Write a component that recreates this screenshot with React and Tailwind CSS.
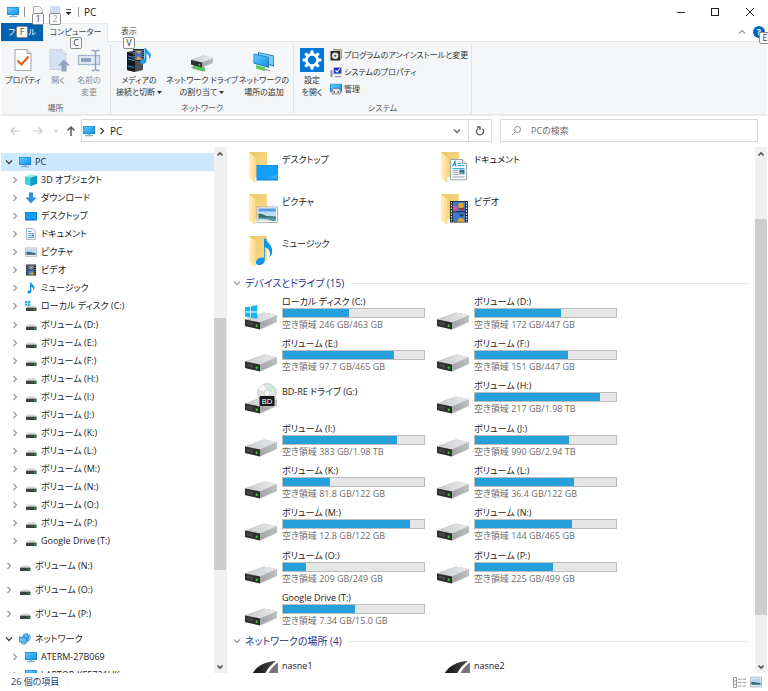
import React from 'react';

const drives = [
  { name: 'ローカル ディスク (C:)', free: '空き領域 246 GB/463 GB', used: 47, type: 'windows' },
  { name: 'ボリューム (D:)', free: '空き領域 172 GB/447 GB', used: 61 },
  { name: 'ボリューム (E:)', free: '空き領域 97.7 GB/465 GB', used: 79 },
  { name: 'ボリューム (F:)', free: '空き領域 151 GB/447 GB', used: 66 },
  { name: 'BD-RE ドライブ (G:)', type: 'bd' },
  { name: 'ボリューム (H:)', free: '空き領域 217 GB/1.98 TB', used: 89 },
  { name: 'ボリューム (I:)', free: '空き領域 383 GB/1.98 TB', used: 81 },
  { name: 'ボリューム (J:)', free: '空き領域 990 GB/2.94 TB', used: 67 },
  { name: 'ボリューム (K:)', free: '空き領域 81.8 GB/122 GB', used: 33 },
  { name: 'ボリューム (L:)', free: '空き領域 36.4 GB/122 GB', used: 70 },
  { name: 'ボリューム (M:)', free: '空き領域 12.8 GB/122 GB', used: 90 },
  { name: 'ボリューム (N:)', free: '空き領域 144 GB/465 GB', used: 69 },
  { name: 'ボリューム (O:)', free: '空き領域 209 GB/249 GB', used: 16 },
  { name: 'ボリューム (P:)', free: '空き領域 225 GB/499 GB', used: 55 },
  { name: 'Google Drive (T:)', free: '空き領域 7.34 GB/15.0 GB', used: 51 },
];

const folders = [
  { name: 'デスクトップ', type: 'desktop' },
  { name: 'ドキュメント', type: 'document' },
  { name: 'ピクチャ', type: 'picture' },
  { name: 'ビデオ', type: 'video' },
  { name: 'ミュージック', type: 'music' },
];

const treeFolders = [
  { name: '3D オブジェクト', type: 'cube' },
  { name: 'ダウンロード', type: 'download' },
  { name: 'デスクトップ', type: 'desktop' },
  { name: 'ドキュメント', type: 'document' },
  { name: 'ピクチャ', type: 'picture' },
  { name: 'ビデオ', type: 'video' },
  { name: 'ミュージック', type: 'music' },
  { name: 'ローカル ディスク (C:)', type: 'windows' },
];

const treeDrives = ['D', 'E', 'F', 'H', 'I', 'J', 'K', 'L', 'M', 'N', 'O', 'P'];

function Gradients() {
  return (
    <svg className="absolute h-0 w-0" aria-hidden="true">
      <defs>
        <linearGradient id="screen" x1="0" y1="0" x2="1" y2="1">
          <stop offset="0" stopColor="#69c8fb" />
          <stop offset="0.5" stopColor="#38aef5" />
          <stop offset="1" stopColor="#1a8fe3" />
        </linearGradient>
        <linearGradient id="folderFront" x1="0" y1="0" x2="1" y2="0">
          <stop offset="0" stopColor="#fff0bd" />
          <stop offset="1" stopColor="#fbdc86" />
        </linearGradient>
        <linearGradient id="folderBack" x1="0" y1="0" x2="1" y2="1">
          <stop offset="0" stopColor="#eec867" />
          <stop offset="1" stopColor="#f8dd8d" />
        </linearGradient>
        <linearGradient id="driveTop" x1="0" y1="0" x2="1" y2="0">
          <stop offset="0" stopColor="#c9cacc" />
          <stop offset="1" stopColor="#e9eaec" />
        </linearGradient>
        <linearGradient id="driveSide" x1="0" y1="0" x2="1" y2="0">
          <stop offset="0" stopColor="#8a8b8d" />
          <stop offset="1" stopColor="#bfc0c2" />
        </linearGradient>
        <linearGradient id="nas" x1="0" y1="0" x2="1" y2="0">
          <stop offset="0" stopColor="#0b0b0c" />
          <stop offset="1" stopColor="#4b494d" />
        </linearGradient>
      </defs>
    </svg>
  );
}

function Chevron({ open, dark }) {
  return (
    <svg className="h-2 w-2 shrink-0" viewBox="0 0 8 8" fill="none" stroke={dark ? '#404040' : '#9c9c9c'} strokeWidth="1.3">
      {open ? <path d="M1 2.5 4 5.5 7 2.5" /> : <path d="M2.5 1 5.5 4 2.5 7" />}
    </svg>
  );
}

function DriveShape() {
  return (
    <g>
      <path d="M0 22.5 19 15.500 32 18v7L15 32.500 0 29z" fill="url(#driveSide)" />
      <path d="M0 22.5 19 15.500 32 18 15 25.500z" fill="url(#driveTop)" />
      <path d="M0 22.5 15 25.500v7L0 29z" fill="#2c2d2f" />
      <path d="M1.5 24.5 8 25.800v3.200L1.500 27.500z" fill="#454648" />
      <circle cx="11.700" cy="28.800" r="1.200" fill="#37c837" />
    </g>
  );
}

function DriveIcon({ type }) {
  return (
    <svg className="h-[34px] w-[34px] shrink-0" viewBox="0 0 34 34">
      <DriveShape />
      {type === 'windows' && (
        <path d="M0 10.2 5.2 9.4v5.2H0zM6 9.2 12.3 8v6.6H6zM0 15.4h5.2v5.2L0 19.8zM6 15.4h6.3v6.4L6 20.8z" fill="#16b7f1" />
      )}
      {type === 'bd' && (
        <g>
          <circle cx="22" cy="12" r="9.5" fill="#dfe3e4" stroke="#bcc0c1" strokeWidth="0.7" />
          <path d="M22 12 13.5 8a9.5 9.5 0 0 1 5-4.6z" fill="#f8f9f9" />
          <path d="M22 12 26 3.6a9.5 9.5 0 0 1 5 5.4z" fill="#c4ecd8" />
          <circle cx="22" cy="12" r="3" fill="#f8f8f8" stroke="#c4c6c6" strokeWidth="0.7" />
          <rect x="14.5" y="15" width="15" height="10" rx="1" fill="#1a1a1a" />
          <text x="22" y="22.8" textAnchor="middle" fontSize="7.5" fill="#fff" fontFamily="Liberation Sans, sans-serif">BD</text>
        </g>
      )}
    </svg>
  );
}

function Note() {
  return <path d="M19 4.5h2c.6 4.500 7.500 6.500 6 14.500-.5 2-1.600 3.500-2.700 4.500 1.700-5.500-.3-9-4.500-10.500V26c0 3.500-3.300 5.300-6.400 5-2.500-.3-3.300-2.500-2-4.500 1.500-2.400 5-3.500 7.600-2.600z" fill="#0e96ee" />;
}

function FolderIcon({ type }) {
  return (
    <svg className="h-[34px] w-[34px] shrink-0" viewBox="0 0 34 34">
      <path d="M4 2h18v25H8z" fill="url(#folderBack)" />
      <path d="M4 2 10.500 7.500v24c0 1-.8 1.200-1.500.7L4 27.500z" fill="url(#folderFront)" />
      {type === 'desktop' && (
        <g>
          <rect x="11.500" y="15" width="21.500" height="15.500" fill="#0e8de8" />
          <rect x="12.200" y="15.600" width="20" height="13" fill="#12a0fb" />
          <path d="M32.200 15.600v9L20.500 28.600h11.700z" fill="#31adfc" />
        </g>
      )}
      {type === 'document' && (
        <g>
          <path d="M13.500 9.500h12l4 4v16.300h-16z" fill="#fbfcfd" stroke="#8e979f" strokeWidth="0.9" />
          <path d="M25.500 9.500v4h4" fill="#dfe4e8" stroke="#8e979f" strokeWidth="0.8" />
          <path d="M15.500 16.500 18 11.500 19 16.500M16.500 14.800h2.300" stroke="#1793dd" fill="none" strokeWidth="1.100" />
          <path d="M20.500 13.500h4M20.500 15.500h7M15.500 18.500h12" stroke="#35a6e8" />
          <path d="M15.500 20.500h6M15.500 22.500h6M15.500 24.500h6M15.500 27h12" stroke="#98a3ab" />
          <rect x="22.500" y="19.700" width="5" height="4.500" fill="#2f6c9e" />
          <path d="M22.500 23.500 24.500 21.500 27.500 24.200h-5z" fill="#75b37e" />
        </g>
      )}
      {type === 'picture' && (
        <g>
          <rect x="12" y="15" width="20.500" height="15.500" fill="#fff" stroke="#9aa0a6" strokeWidth="0.8" />
          <rect x="13.500" y="16.500" width="17.500" height="12.500" fill="#b9dcf7" />
          <rect x="13.500" y="16.500" width="17.500" height="3" fill="#5c9de0" />
          <path d="M13.500 21.500c3 .3 5 1 8 2.500l9.500.5v1.500H13.500z" fill="#3c6b56" />
          <path d="M13.500 25.500H31V29H13.500z" fill="#4b98b8" />
          <path d="M13.500 27c5-.6 10 .2 14 2h-14z" fill="#d8dfcf" />
        </g>
      )}
      {type === 'video' && (
        <g>
          <rect x="13" y="9" width="18" height="21.500" fill="#262626" />
          <rect x="16" y="9.800" width="12" height="9.500" fill="#3a78d6" />
          <rect x="16" y="20.300" width="12" height="9.500" fill="#3a78d6" />
          <path d="M16 14c2-1 4 0 5 2l-1 3h-4z" fill="#c65a9e" />
          <circle cx="24" cy="13.500" r="2.800" fill="#e2a51d" />
          <path d="M21.500 16h6l-3 3.300z" fill="#b22b1e" />
          <path d="M20.500 29.800c0-5 7-5 7 0z" fill="#e2a51d" />
          <path d="M22 22.500h5l-2.500 2.500z" fill="#27341d" />
          <path d="M14.500 10v20M29.500 10v20" stroke="#e8e8e8" strokeWidth="1.300" strokeDasharray="1.500 1.300" />
        </g>
      )}
      {type === 'music' && <Note />}
    </svg>
  );
}

function NasIcon() {
  return (
    <svg className="h-[34px] w-[34px] shrink-0" viewBox="0 0 34 34">
      <path d="M6 20.500C10 11 19 5.500 31 5c-6 4.500-10 9.500-12.500 16l-1 6H6z" fill="url(#nas)" />
      <path d="M33 6.500V27H20C22 17 27 10.500 33 6.500z" fill="#777579" />
    </svg>
  );
}

function SmallIcon({ type }) {
  return (
    <svg className="h-3 w-3 shrink-0" viewBox="0 0 12 12">
      {type === 'pc' && (
        <g>
          <rect x="0" y="1" width="12" height="8" fill="#1a7fc4" />
          <rect x="0.600" y="1.600" width="10.800" height="6.800" fill="url(#screen)" />
          <path d="M4.500 9h3v1.200h-3z" fill="#a9bccb" />
          <path d="M2 10.200h8v1H2z" fill="#6f9fbe" />
        </g>
      )}
      {type === 'cube' && (
        <g>
          <path d="M0 2.500 6.500.5 12 1.700v8L5.500 12 0 10z" fill="#45cfe0" />
          <path d="M0 2.500 6.500.5 12 1.700 5.500 3.700z" fill="#9aeef2" />
          <path d="M5.500 3.700 12 1.700v8L5.500 12z" fill="#0e9dbd" />
        </g>
      )}
      {type === 'download' && <path d="M4 .5h4v5h3.500L6 11.500.5 5.500H4z" fill="#2f8be0" />}
      {type === 'desktop' && (
        <g>
          <rect x="0" y="2" width="12" height="8.500" fill="#0a78cf" />
          <rect x="0.500" y="2.500" width="11" height="6.700" fill="#139dfa" />
        </g>
      )}
      {type === 'document' && (
        <g>
          <path d="M1.500.5h6.500l2.500 2.500v8.500h-9z" fill="#f4f8fb" stroke="#a2abb3" strokeWidth="0.800" />
          <path d="M3 3.500h3.500M3 5.500h6M3 7.500h3M3 9.500h6" stroke="#63aadb" />
          <rect x="6.500" y="6.500" width="2.500" height="2" fill="#4a86ad" />
        </g>
      )}
      {type === 'picture' && (
        <g>
          <rect x="0.400" y="2" width="11.200" height="8.200" fill="#fff" stroke="#a3a9ae" strokeWidth="0.800" />
          <rect x="1.400" y="3" width="9.200" height="6.200" fill="#b4d8f1" />
          <path d="M1.400 5.800c3 0 5 1.200 9.200 1.200v1.700H1.400z" fill="#35667a" />
        </g>
      )}
      {type === 'video' && (
        <g>
          <rect x="1" y="0.500" width="10" height="11" fill="#2b2b2b" />
          <rect x="3" y="1.200" width="6" height="4.500" fill="#5077b8" />
          <rect x="3" y="6.300" width="6" height="4.500" fill="#5077b8" />
          <path d="M5 2.500h3.500L6 5.700zM4.500 10.500 7 7.500l2 3z" fill="#d9a032" />
          <path d="M2 1v10M10 1v10" stroke="#bdbdbd" strokeWidth="0.800" strokeDasharray="1 1" />
        </g>
      )}
      {type === 'music' && (
        <path d="M5 .5h1.200c.3 2 3.800 3 3.300 6-.2 1-.6 1.700-1.200 2.200.4-2-.2-3.200-2-3.900v4.700c0 1.400-1.400 2.200-2.800 2-1.200-.2-1.500-1.200-.9-2.100C3.200 8.500 4.200 8.100 5 8.300z" fill="#0e96ee" />
      )}
      {(type === 'drive' || type === 'windows') && (
        <g>
          <path d="M2.500 5.500h7.500l1.500 2.500H1z" fill="#d3d5d7" />
          <path d="M1 7.700h10.500v3.300H1z" fill="#3f4143" />
          <circle cx="9.500" cy="9.300" r="0.700" fill="#3bd13b" />
        </g>
      )}
      {type === 'windows' && <path d="M0 1h2.200v2H0zM2.700.8h2.600V3H2.700zM0 3.500h2.200v2H0zM2.700 3.500h2.600v2.200H2.700z" fill="#16b0ea" />}
      {type === 'network' && (
        <g>
          <circle cx="7.500" cy="4.500" r="4.200" fill="#3d9bd8" />
          <path d="M5.500 1c2 .8 2 2 1 3.500M9 1c2 2 2 4 1 6" stroke="#a6dcf7" strokeWidth="0.900" fill="none" />
          <path d="M0 3.500 7.500 5v6L0 9z" fill="#1a7fc4" />
          <path d="M.6 4.300 6.900 5.600v4.500L.6 8.500z" fill="#5cc0f7" />
          <path d="M2 10.500l4 1.200" stroke="#6f9fbe" />
        </g>
      )}
    </svg>
  );
}

function KeyTip({ children, className }) {
  return (
    <span className={`absolute z-10 flex h-3 w-3 items-center justify-center rounded-[2px] border border-[#8c8c8c] bg-[#fafafa] text-[9px] leading-[10px] text-[#444] ${className}`}>
      {children}
    </span>
  );
}

function TreeItem({ name, type, open, child, tall, selected }) {
  return (
    <li>
      <button
        type="button"
        className={`flex w-full items-center whitespace-nowrap text-left ${child ? 'pl-[10px]' : 'pl-1'} ${tall ? 'h-6' : 'h-[18px]'} ${selected ? 'bg-[#cce8ff]' : ''}`}
      >
        <Chevron open={open} dark={open} />
        <span className="ml-1.5 mr-1 flex"><SmallIcon type={type} /></span>
        {name}
      </button>
    </li>
  );
}

function ScrollBar({ before, size }) {
  return (
    <div className="flex w-3 shrink-0 flex-col bg-[#f0f0f0]">
      <button type="button" aria-label="上へ" className="flex h-[13px] shrink-0 items-center justify-center">
        <svg className="h-2 w-2" viewBox="0 0 8 8" fill="none" stroke="#505050" strokeWidth="1.600"><path d="M1.500 5.500 4 3 6.500 5.500" /></svg>
      </button>
      <div className="min-h-0 flex-1">
        <div style={{ height: `${before}%` }} />
        <div className="bg-[#cdcdcd]" style={{ height: `${size}%` }} />
      </div>
      <button type="button" aria-label="下へ" className="flex h-[13px] shrink-0 items-center justify-center">
        <svg className="h-2 w-2" viewBox="0 0 8 8" fill="none" stroke="#505050" strokeWidth="1.600"><path d="M1.500 2.500 4 5 6.500 2.500" /></svg>
      </button>
    </div>
  );
}

function SectionTitle({ children }) {
  return (
    <div className="flex h-[14px] items-center pl-1 pr-1.5">
      <Chevron open />
      <h2 className="ml-1 whitespace-nowrap text-[10px] leading-[14px] text-[#1e3287]">{children}</h2>
      <div className="ml-1.5 h-px flex-1 bg-[#e5e5e5]" />
    </div>
  );
}

function RibbonButton({ icon, lines, menu, disabled, className }) {
  return (
    <button type="button" disabled={disabled} className={`flex shrink-0 flex-col items-center whitespace-nowrap pt-0.5 ${disabled ? 'text-[#8b8b8b]' : ''} ${className}`}>
      <span className="flex h-7 items-center">{icon}</span>
      {lines.map((line, i) => (
        <span key={i} className="flex items-center leading-[12px]">
          {line}
          {menu && i === lines.length - 1 && (
            <svg className="ml-0.5 h-[3px] w-[5px]" viewBox="0 0 5 3"><path d="M0 0h5L2.500 3z" fill="#333" /></svg>
          )}
        </span>
      ))}
    </button>
  );
}

function RibbonGroup({ title, className, children }) {
  return (
    <section className={`mt-0.5 flex shrink-0 flex-col border-r border-[#e2e3e4] ${className}`}>
      <div className="flex flex-1 items-start">{children}</div>
      <h3 className="text-center leading-[12px] text-[#5c5c5c]">{title}</h3>
    </section>
  );
}

function PropertiesIcon() {
  return (
    <svg className="h-6 w-6" viewBox="0 0 24 24">
      <path d="M4 1.500h12l4 4v17H4z" fill="#fdfdfd" stroke="#8d9197" strokeWidth="0.800" />
      <path d="M16 1.500v4h4" fill="#e4e6e9" stroke="#8d9197" strokeWidth="0.800" />
      <path d="M6.500 12.500 10.500 16.500 17.500 8.500" fill="none" stroke="#ea5b1c" strokeWidth="2.200" />
    </svg>
  );
}

function OpenIcon() {
  return (
    <svg className="h-6 w-6" viewBox="0 0 24 24">
      <path d="M4 1.500h12l4 4v16H4z" fill="#d5e0f1" stroke="#bccadf" strokeWidth="0.700" />
      <path d="M16 1.500v4h4" fill="#edf2f8" stroke="#bccadf" strokeWidth="0.700" />
      <path d="M18 11.500 24 17.500h-3.500V23.500h-5v-6H12z" fill="#92a4c4" />
    </svg>
  );
}

function RenameIcon() {
  return (
    <svg className="h-6 w-6" viewBox="0 0 24 24" fill="none">
      <rect x="1.500" y="7.500" width="21" height="9" fill="#e4eaf4" stroke="#a6b4cd" strokeWidth="1.300" />
      <rect x="4" y="10" width="10" height="4" fill="#8fa2c2" />
      <path d="M14.500 2.500h2.500l1.500 1 1.500-1h2.500M18.500 3.500v18M14.500 22.500h2.500l1.500-1 1.500 1h2.500" stroke="#8fa2c2" strokeWidth="1.500" />
    </svg>
  );
}

function MediaIcon() {
  return (
    <svg className="h-6 w-6" viewBox="0 0 24 24">
      <path d="M0 4 7 2.500 16 5v17l-8 2-8-2z" fill="#4c5157" />
      <path d="M0 4 8 6v18l-8-2z" fill="#16181b" />
      <path d="M1 8 7 9.500M1 11 7 12.500M1 18l6 1.500" stroke="#2b9be8" strokeWidth="1" />
      <rect x="6" y="1" width="11" height="12" fill="#262626" />
      <rect x="8" y="2" width="7" height="10" fill="#426fbb" />
      <path d="M9 3h5l-2 3zM9 12 11 8l4 3.500z" fill="#e2aa34" />
      <path d="M7 2v11M16 2v11" stroke="#d5d5d5" strokeDasharray="1 1" strokeWidth="0.800" />
      <path d="M17.500 0h1.500c.5 3 5.500 4 4.700 8-.2 1.500-.8 2.500-1.600 3.200.6-3-.4-4.600-2.600-5.600v6.900c0 2.500-2.200 3.800-4.300 3.500-2-.3-2.400-2-1.300-3.400.8-1.200 2.300-1.700 3.600-1.400z" fill="#169cf0" />
    </svg>
  );
}

function NetDriveIcon() {
  return (
    <svg className="h-6 w-6" viewBox="0 0 24 24">
      <path d="M1 18 13 21v2.500L2 20.500z" fill="#a9b0aa" />
      <path d="M3 17 15 19.500v4L3 20.500z" fill="#4fc458" />
      <path d="M1 12 13 7.500l10 2.500v5L12 19.500l-11-3z" fill="url(#driveSide)" />
      <path d="M1 12 13 7.500l10 2.500L12 14.500z" fill="url(#driveTop)" />
      <path d="M1 12 12 14.500v5l-11-3z" fill="#2d2e30" />
      <circle cx="9.500" cy="16.700" r="0.900" fill="#3bd13b" />
    </svg>
  );
}

function NetPlaceIcon() {
  return (
    <svg className="h-6 w-6" viewBox="0 0 24 24">
      <path d="M6 4 22 7.500v11L6 14z" fill="#217fbd" />
      <path d="M7 5 21.200 8.200v8.800L7 13.500z" fill="#78cdf8" />
      <path d="M1.500 5.500 17 9v11L1.500 15.500z" fill="#217fbd" />
      <path d="M2.300 6.600 16.200 9.700v9L2.300 14.800z" fill="url(#screen)" />
      <path d="M4 17 13 19.500v3.500l-9-2.500z" fill="#58c95f" />
      <path d="M13 21.500 18 22.500" stroke="#8a8a8a" />
    </svg>
  );
}

function SettingsIcon() {
  return (
    <svg className="h-6 w-6" viewBox="0 0 24 24">
      <rect width="24" height="24" fill="#0078d7" />
      <circle cx="12" cy="12" r="5.600" fill="none" stroke="#fff" strokeWidth="2.800" />
      <g stroke="#fff" strokeWidth="3.200">
        <path d="M12 2.600v3.200M12 18.200v3.200M2.600 12h3.200M18.200 12h3.200" />
        <path d="M5.350 5.350 7.600 7.600M16.400 16.400l2.250 2.250M18.650 5.350 16.400 7.600M7.600 16.400l-2.250 2.250" />
      </g>
    </svg>
  );
}

function SystemLink({ type, children }) {
  return (
    <button type="button" className="flex h-[17px] items-center gap-0.5 whitespace-nowrap">
      <svg className="h-3 w-3 shrink-0" viewBox="0 0 12 12">
        {type === 'uninstall' && (
          <g>
            <path d="M3 .5h8.500v9L10 11" fill="#c8c1a8" stroke="#77756a" strokeWidth="0.700" />
            <rect x="0.500" y="2" width="9.500" height="9.500" fill="#2a2a2a" />
            <circle cx="5.200" cy="6.800" r="3.200" fill="#e3e6e6" />
            <circle cx="5.200" cy="6.800" r="1.100" fill="#555" />
          </g>
        )}
        {type === 'system' && (
          <g>
            <rect x="3" y="1" width="9" height="7.500" fill="#c7c9cd" />
            <rect x="4" y="1.800" width="7.200" height="5.600" fill="#1632c9" />
            <path d="M5.500 4.500 7.200 6 10 2.500" fill="none" stroke="#fff" strokeWidth="1.200" />
            <path d="M.5 4h2v7h-2zM5 10h6v1.300H5z" fill="#8f9295" />
          </g>
        )}
        {type === 'manage' && (
          <g>
            <rect x="0" y="0.800" width="12" height="8" fill="#1a7fc4" />
            <rect x="0.600" y="1.300" width="10.800" height="6" fill="url(#screen)" />
            <path d="M2 7.500 4 5.500h4.500l2 2V11H2z" fill="#e4e6e8" stroke="#6f7377" strokeWidth="0.700" />
            <path d="M4.200 8v2M8.200 8v2" stroke="#333" />
          </g>
        )}
      </svg>
      {children}
    </button>
  );
}

function TitleBar() {
  return (
    <header className="flex h-[23px] shrink-0 items-center pl-[7px] text-[10px]">
      <SmallIcon type="pc" />
      <div className="ml-[5px] h-2.5 w-px bg-[#999]" />
      <button type="button" aria-label="プロパティ" className="relative ml-[7px] h-3 w-3">
        <svg className="h-3 w-3" viewBox="0 0 12 12">
          <path d="M1.500.5h6l3 3v8h-9z" fill="#fdfdfd" stroke="#a0a0a0" strokeWidth="0.800" />
          <path d="M8 9.500l2-3" stroke="#ea5b1c" strokeWidth="1.400" />
        </svg>
        <KeyTip className="left-0 top-[7px]">1</KeyTip>
      </button>
      <button type="button" aria-label="新しいフォルダー" className="relative ml-[5px] h-3 w-3">
        <svg className="h-3 w-3" viewBox="0 0 12 12"><path d="M1 0h10v12H1z" fill="#d0dcf0" /></svg>
        <KeyTip className="left-0 top-[7px] text-[#aaa]">2</KeyTip>
      </button>
      <svg className="ml-1 h-2 w-[7px]" viewBox="0 0 7 8"><path d="M1 1.500h5" stroke="#555" /><path d="M.5 4h6L3.500 7z" fill="#222" /></svg>
      <div className="ml-1.5 h-2.5 w-px bg-[#999]" />
      <span className="ml-[5px]">PC</span>
      <div className="ml-auto flex">
        <button type="button" aria-label="最小化" className="flex h-[23px] w-[34px] items-center justify-center">
          <svg className="h-2 w-2" viewBox="0 0 8 8"><path d="M0 4.500h8" stroke="#222" /></svg>
        </button>
        <button type="button" aria-label="最大化" className="flex h-[23px] w-[34px] items-center justify-center">
          <svg className="h-2 w-2" viewBox="0 0 8 8"><rect x="0.500" y="0.500" width="7" height="7" fill="none" stroke="#222" /></svg>
        </button>
        <button type="button" aria-label="閉じる" className="flex h-[23px] w-9 items-center justify-center">
          <svg className="h-2 w-2" viewBox="0 0 8 8"><path d="M0 0 8 8M8 0 0 8" stroke="#222" /></svg>
        </button>
      </div>
    </header>
  );
}

function Tabs() {
  return (
    <nav className="flex h-[19px] shrink-0 border-b border-[#e6e7e8] pl-px text-[8px]">
      <button type="button" className="relative w-[42px] bg-[#0063b1] text-white">
        ファイル
        <KeyTip className="left-[15px] top-[3px]">F</KeyTip>
      </button>
      <button type="button" className="relative -mb-px w-[65px] border-x border-t border-[#e6e7e8] bg-[#f5f6f7] pb-0.5 text-[#444]">
        コンピューター
        <KeyTip className="left-[26px] top-[13px]">C</KeyTip>
      </button>
      <button type="button" className="relative w-[42px] pb-0.5 text-[#444]">
        表示
        <KeyTip className="left-[15px] top-[14px]">V</KeyTip>
      </button>
      <div className="ml-auto flex items-center">
        <button type="button" aria-label="リボンの最小化">
          <svg className="h-2 w-2" viewBox="0 0 8 8" fill="none" stroke="#999" strokeWidth="1.200"><path d="M1 5.500 4 2.500 7 5.500" /></svg>
        </button>
        <button type="button" aria-label="ヘルプ" className="relative ml-[7px] mr-[3px] flex h-3 w-3 items-center justify-center rounded-full bg-[#0067c0] text-[9px] font-bold leading-[12px] text-white">
          ?
          <KeyTip className="left-1.5 top-1.5 font-normal">E</KeyTip>
        </button>
      </div>
    </nav>
  );
}

function Ribbon() {
  return (
    <div className="mx-px flex h-[74px] shrink-0 overflow-hidden border-b-2 border-[#e9eaeb] bg-[#f5f6f7] text-[8px] text-[#333]">
      <RibbonGroup title="場所" className="w-[110px]">
        <RibbonButton className="ml-1 w-9" icon={<PropertiesIcon />} lines={['プロパティ']} />
        <RibbonButton className="w-[34px]" disabled icon={<OpenIcon />} lines={['開く']} />
        <RibbonButton className="w-7" disabled icon={<RenameIcon />} lines={['名前の', '変更']} />
      </RibbonGroup>
      <RibbonGroup title="ネットワーク" className="w-[183px]">
        <RibbonButton className="w-[56px]" menu icon={<MediaIcon />} lines={['メディアの', '接続と切断']} />
        <RibbonButton className="w-[70px]" menu icon={<NetDriveIcon />} lines={['ネットワーク ドライブ', 'の割り当て']} />
        <RibbonButton className="w-[54px]" icon={<NetPlaceIcon />} lines={['ネットワークの', '場所の追加']} />
      </RibbonGroup>
      <RibbonGroup title="システム" className="w-[178px]">
        <RibbonButton className="w-9" icon={<SettingsIcon />} lines={['設定', 'を開く']} />
        <div className="flex flex-col items-start pt-0.5">
          <SystemLink type="uninstall">プログラムのアンインストールと変更</SystemLink>
          <SystemLink type="system">システムのプロパティ</SystemLink>
          <SystemLink type="manage">管理</SystemLink>
        </div>
      </RibbonGroup>
    </div>
  );
}

function AddressBar() {
  return (
    <div className="flex h-[31px] shrink-0 items-center pb-0.5 pl-2 pr-[10px]">
      <button type="button" aria-label="戻る" className="w-[14px]">
        <svg className="h-[14px] w-[14px]" viewBox="0 0 14 14" fill="none" stroke="#c6c6c6" strokeWidth="1.200"><path d="M12 7H3M6.500 3.500 3 7l3.500 3.500" /></svg>
      </button>
      <button type="button" aria-label="進む" className="ml-2 w-[14px]">
        <svg className="h-[14px] w-[14px]" viewBox="0 0 14 14" fill="none" stroke="#c6c6c6" strokeWidth="1.200"><path d="M3 7h9M8.500 3.500 12 7l-3.500 3.500" /></svg>
      </button>
      <button type="button" aria-label="最近表示した場所" className="ml-2 w-2">
        <svg className="h-2 w-2" viewBox="0 0 8 8" fill="none" stroke="#c6c6c6" strokeWidth="1.200"><path d="M2 3 4 5 6 3" /></svg>
      </button>
      <button type="button" aria-label="上へ" className="ml-1 mr-[3px] w-[14px]">
        <svg className="h-[14px] w-[14px]" viewBox="0 0 14 14" fill="none" stroke="#555" strokeWidth="1.500"><path d="M7 12V3M3.500 6.500 7 3l3.500 3.500" /></svg>
      </button>
      <div className="flex h-[23px] flex-[409] items-center border border-[#d9d9d9] text-[10px]">
        <span className="ml-px flex"><SmallIcon type="pc" /></span>
        <span className="ml-[3px]"><Chevron dark /></span>
        <span className="ml-1">PC</span>
        <button type="button" aria-label="以前の場所" className="ml-auto flex h-full w-[22px] items-center justify-center">
          <svg className="h-2 w-2" viewBox="0 0 8 8" fill="none" stroke="#666" strokeWidth="1.500"><path d="M1 2.500 4 5.500 7 2.500" /></svg>
        </button>
        <button type="button" aria-label="最新の情報に更新" className="flex h-full w-[23px] items-center justify-center border-l border-[#d9d9d9]">
          <svg className="h-[10px] w-[10px]" viewBox="0 0 10 10" fill="none" stroke="#555" strokeWidth="1.300"><path d="M7.500 2.800A3.500 3.500 0 1 1 3 2.500M2 1h3v3" /></svg>
        </button>
      </div>
      <label className="ml-2 flex h-[23px] flex-[246] items-center border border-[#d9d9d9] pl-2.5">
        <svg className="h-[11px] w-[11px] shrink-0" viewBox="0 0 11 11" fill="none" stroke="#8a8a8a"><circle cx="6.500" cy="4.500" r="3" /><path d="M4.300 6.700 1 10" /></svg>
        <input type="search" aria-label="PCの検索" placeholder="PCの検索" className="ml-[9px] w-full min-w-0 outline-none placeholder:text-[#6d6d6d]" />
      </label>
    </div>
  );
}

function Sidebar() {
  return (
    <aside className="flex w-[227px] shrink-0 border-r border-[#f0f0f0]">
      <div className="ml-px min-w-0 flex-1 overflow-hidden pt-1.5">
        <ul>
          <TreeItem name="PC" type="pc" open selected />
          {treeFolders.map((item) => (
            <TreeItem key={item.name} name={item.name} type={item.type} child />
          ))}
        </ul>
        <ul className="mt-px">
          {treeDrives.map((letter) => (
            <TreeItem key={letter} name={`ボリューム (${letter}:)`} type="drive" child />
          ))}
          <TreeItem name="Google Drive (T:)" type="drive" child />
        </ul>
        <ul className="mt-1">
          <TreeItem name="ボリューム (N:)" type="drive" tall />
          <TreeItem name="ボリューム (O:)" type="drive" tall />
          <TreeItem name="ボリューム (P:)" type="drive" tall />
        </ul>
        <ul className="mt-1">
          <TreeItem name="ネットワーク" type="network" open />
          <TreeItem name="ATERM-27B069" type="pc" child />
          <TreeItem name="LAPTOP-KF5721UK" type="pc" child />
        </ul>
      </div>
      <ScrollBar before={31.6} size={50.4} />
    </aside>
  );
}

function Drive({ drive }) {
  return (
    <li className="flex gap-[3px]">
      <span className="pt-1.5"><DriveIcon type={drive.type} /></span>
      {drive.free ? (
        <div className="w-[143px] pt-1">
          <p className="whitespace-nowrap leading-[13px]">{drive.name}</p>
          <div role="meter" aria-label={drive.name} aria-valuenow={drive.used} aria-valuemin="0" aria-valuemax="100" className="h-[10px] border border-[#bcbcbc] bg-[#e6e6e6]">
            <div className="h-full bg-[#26a0da]" style={{ width: `${drive.used}%` }} />
          </div>
          <p className="whitespace-nowrap leading-[13px] text-[#6d6d6d]">{drive.free}</p>
        </div>
      ) : (
        <p className="whitespace-nowrap pt-[10px] leading-[13px]">{drive.name}</p>
      )}
    </li>
  );
}

function Content() {
  return (
    <main className="flex min-w-0 flex-1 pr-px">
      <div className="min-w-0 flex-1 overflow-hidden pl-0.5 pt-[3px]">
        <ul className="grid auto-rows-[42px] grid-cols-[repeat(auto-fill,192px)] pl-4">
          {folders.map((folder) => (
            <li key={folder.name} className="flex gap-[3px]">
              <FolderIcon type={folder.type} />
              <span className="pt-1 leading-[12px]">{folder.name}</span>
            </li>
          ))}
        </ul>
        <SectionTitle>デバイスとドライブ (15)</SectionTitle>
        <ul className="mt-px grid auto-rows-[42px_42px_43px] grid-cols-[repeat(auto-fill,192px)] pl-4">
          {drives.map((drive) => (
            <Drive key={drive.name} drive={drive} />
          ))}
        </ul>
        <div className="h-[5px]" />
        <SectionTitle>ネットワークの場所 (4)</SectionTitle>
        <ul className="mt-2 grid auto-rows-[42px] grid-cols-[repeat(auto-fill,192px)] pl-4">
          {['nasne1', 'nasne2'].map((name) => (
            <li key={name} className="flex gap-[3px]">
              <NasIcon />
              <span className="pt-1 leading-[12px]">{name}</span>
            </li>
          ))}
        </ul>
      </div>
      <ScrollBar before={11.8} size={79.2} />
    </main>
  );
}

function StatusBar() {
  return (
    <footer className="flex h-[18px] shrink-0 items-center pl-[11px] pr-1.5 text-[#26456b]">
      <span className="border-r border-[#f0f0f0] pr-2 leading-[12px]">26 個の項目</span>
      <button type="button" aria-label="詳細表示" className="ml-auto flex">
        <svg className="h-[11px] w-[13px]" viewBox="0 0 13 11">
          <path d="M.5.500h3v10h-3zM.5 4h3M.5 7.300h3" fill="none" stroke="#9a9a9a" />
          <path d="M5 2.200h3.500M9.500 2.200H13M5 5.600h3.500M9.500 5.600H13M5 9h3.500M9.500 9H13" stroke="#9a9a9a" />
        </svg>
      </button>
      <button type="button" aria-label="大きいアイコン" className="ml-1 flex bg-[#d9ebf9]">
        <SmallIcon type="picture" />
      </button>
    </footer>
  );
}

export default function App() {
  return (
    <div
      lang="ja"
      className="flex h-screen flex-col overflow-hidden bg-white font-['Open_Sans','Noto_Sans_CJK_JP',sans-serif] text-[9px] leading-[12px] text-[#1a1a1a] [font-feature-settings:'palt']"
    >
      <Gradients />
      <TitleBar />
      <Tabs />
      <Ribbon />
      <AddressBar />
      <div className="flex min-h-0 flex-1">
        <Sidebar />
        <Content />
      </div>
      <StatusBar />
    </div>
  );
}
